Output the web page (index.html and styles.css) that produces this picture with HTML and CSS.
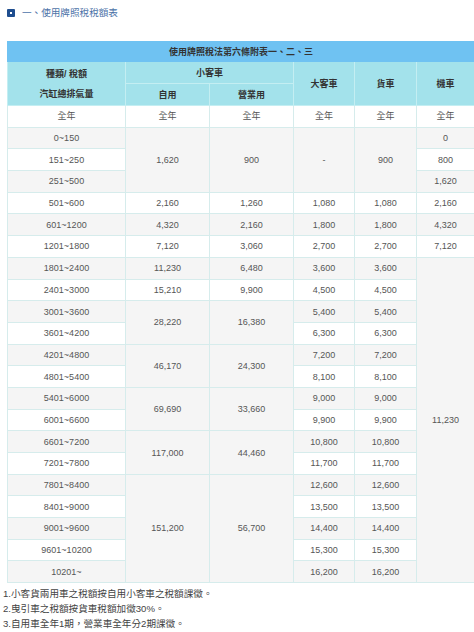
FILE: index.html
```html
<!DOCTYPE html>
<html lang="zh-Hant">
<head>
<meta charset="utf-8">
<link rel="stylesheet" href="styles.css">
</head>
<body>
<div class="page">
  <h2 class="heading"><span class="heading-icon"></span>一、使用牌照稅稅額表</h2>
  <table class="tax">
    <colgroup>
      <col class="c1"><col class="c2"><col class="c3"><col class="c4"><col class="c5"><col class="c6">
    </colgroup>
    <thead>
      <tr class="cap"><th colspan="6">使用牌照稅法第六條附表一、二、三</th></tr>
      <tr class="hd"><th rowspan="2" class="two">種類/ 稅額<br>汽缸總排氣量</th><th colspan="2">小客車</th><th rowspan="2">大客車</th><th rowspan="2">貨車</th><th rowspan="2">機車</th></tr>
      <tr class="hd"><th>自用</th><th>營業用</th></tr>
    </thead>
    <tbody>
      <tr class="w"><td>全年</td><td>全年</td><td>全年</td><td>全年</td><td>全年</td><td>全年</td></tr>
      <tr class="g"><td>0~150</td><td rowspan="3">1,620</td><td rowspan="3">900</td><td rowspan="3">-</td><td rowspan="3">900</td><td>0</td></tr>
      <tr class="w"><td>151~250</td><td>800</td></tr>
      <tr class="g"><td>251~500</td><td>1,620</td></tr>
      <tr class="w"><td>501~600</td><td>2,160</td><td>1,260</td><td>1,080</td><td>1,080</td><td>2,160</td></tr>
      <tr class="g"><td>601~1200</td><td>4,320</td><td>2,160</td><td>1,800</td><td>1,800</td><td>4,320</td></tr>
      <tr class="w"><td>1201~1800</td><td>7,120</td><td>3,060</td><td>2,700</td><td>2,700</td><td>7,120</td></tr>
      <tr class="g"><td>1801~2400</td><td>11,230</td><td>6,480</td><td>3,600</td><td>3,600</td><td rowspan="15">11,230</td></tr>
      <tr class="w"><td>2401~3000</td><td>15,210</td><td>9,900</td><td>4,500</td><td>4,500</td></tr>
      <tr class="g"><td>3001~3600</td><td rowspan="2">28,220</td><td rowspan="2">16,380</td><td>5,400</td><td>5,400</td></tr>
      <tr class="w"><td>3601~4200</td><td>6,300</td><td>6,300</td></tr>
      <tr class="g"><td>4201~4800</td><td rowspan="2">46,170</td><td rowspan="2">24,300</td><td>7,200</td><td>7,200</td></tr>
      <tr class="w"><td>4801~5400</td><td>8,100</td><td>8,100</td></tr>
      <tr class="g"><td>5401~6000</td><td rowspan="2">69,690</td><td rowspan="2">33,660</td><td>9,000</td><td>9,000</td></tr>
      <tr class="w"><td>6001~6600</td><td>9,900</td><td>9,900</td></tr>
      <tr class="g"><td>6601~7200</td><td rowspan="2">117,000</td><td rowspan="2">44,460</td><td>10,800</td><td>10,800</td></tr>
      <tr class="w"><td>7201~7800</td><td>11,700</td><td>11,700</td></tr>
      <tr class="g"><td>7801~8400</td><td rowspan="5">151,200</td><td rowspan="5">56,700</td><td>12,600</td><td>12,600</td></tr>
      <tr class="w"><td>8401~9000</td><td>13,500</td><td>13,500</td></tr>
      <tr class="g"><td>9001~9600</td><td>14,400</td><td>14,400</td></tr>
      <tr class="w"><td>9601~10200</td><td>15,300</td><td>15,300</td></tr>
      <tr class="g"><td>10201~</td><td>16,200</td><td>16,200</td></tr>
    </tbody>
  </table>
  <div class="notes">
    <p>1.小客貨兩用車之稅額按自用小客車之稅額課徵。</p>
    <p>2.曳引車之稅額按貨車稅額加徵30%。</p>
    <p>3.自用車全年1期，營業車全年分2期課徵。</p>
  </div>
</div>
</body>
</html>
```

FILE: styles.css
```css
html, body {
  margin: 0;
  padding: 0;
  background: #ffffff;
}
body {
  font-family: "Liberation Sans", Arial, "Noto Sans CJK TC", sans-serif;
  color: #444;
}
.page {
  padding: 0 0 0 7px;
}
.heading {
  margin: 0;
  padding-top: 6px;
  height: 41px;
  box-sizing: border-box;
  display: flex;
  align-items: flex-start;
  gap: 7px;
  font-size: 9.6px;
  line-height: 14px;
  font-weight: normal;
  color: #4d73a8;
}
.heading-icon {
  width: 8px;
  height: 8px;
  margin-top: 3px;
  background: #1f4e8f;
  border-radius: 1px;
  position: relative;
  flex: none;
}
.heading-icon::after {
  content: "";
  position: absolute;
  left: 3px;
  top: 3px;
  width: 2px;
  height: 2px;
  background: #ffffff;
}
.tax {
  border-collapse: collapse;
  table-layout: fixed;
  width: 467px;
  font-size: 9px;
  text-align: center;
}
.c1 { width: 118px; }
.c2 { width: 84px; }
.c3 { width: 84px; }
.c4 { width: 61px; }
.c5 { width: 62px; }
.c6 { width: 58px; }
.tax th, .tax td {
  border: 1px solid #d6ecec;
  padding: 0;
  line-height: 12px;
}
.tax th {
  font-weight: bold;
  color: #333;
}
.cap th {
  background: #6fc2f2;
  height: 19px;
  border-color: #6fc2f2;
}
.hd th {
  background: #a3e2eb;
  border-color: #c4eef2;
  height: 21px;
}
.hd th.two {
  line-height: 20px;
}
.tax td {
  height: 20.7px;
  color: #555;
}
.tax tr.g td { background: #f5f5f5; }
.tax tr.w td { background: #ffffff; }
.notes {
  margin-top: 3px;
  margin-left: -4px;
  font-size: 9.6px;
  line-height: 15px;
  color: #444;
}
.notes p {
  margin: 0;
}
```
